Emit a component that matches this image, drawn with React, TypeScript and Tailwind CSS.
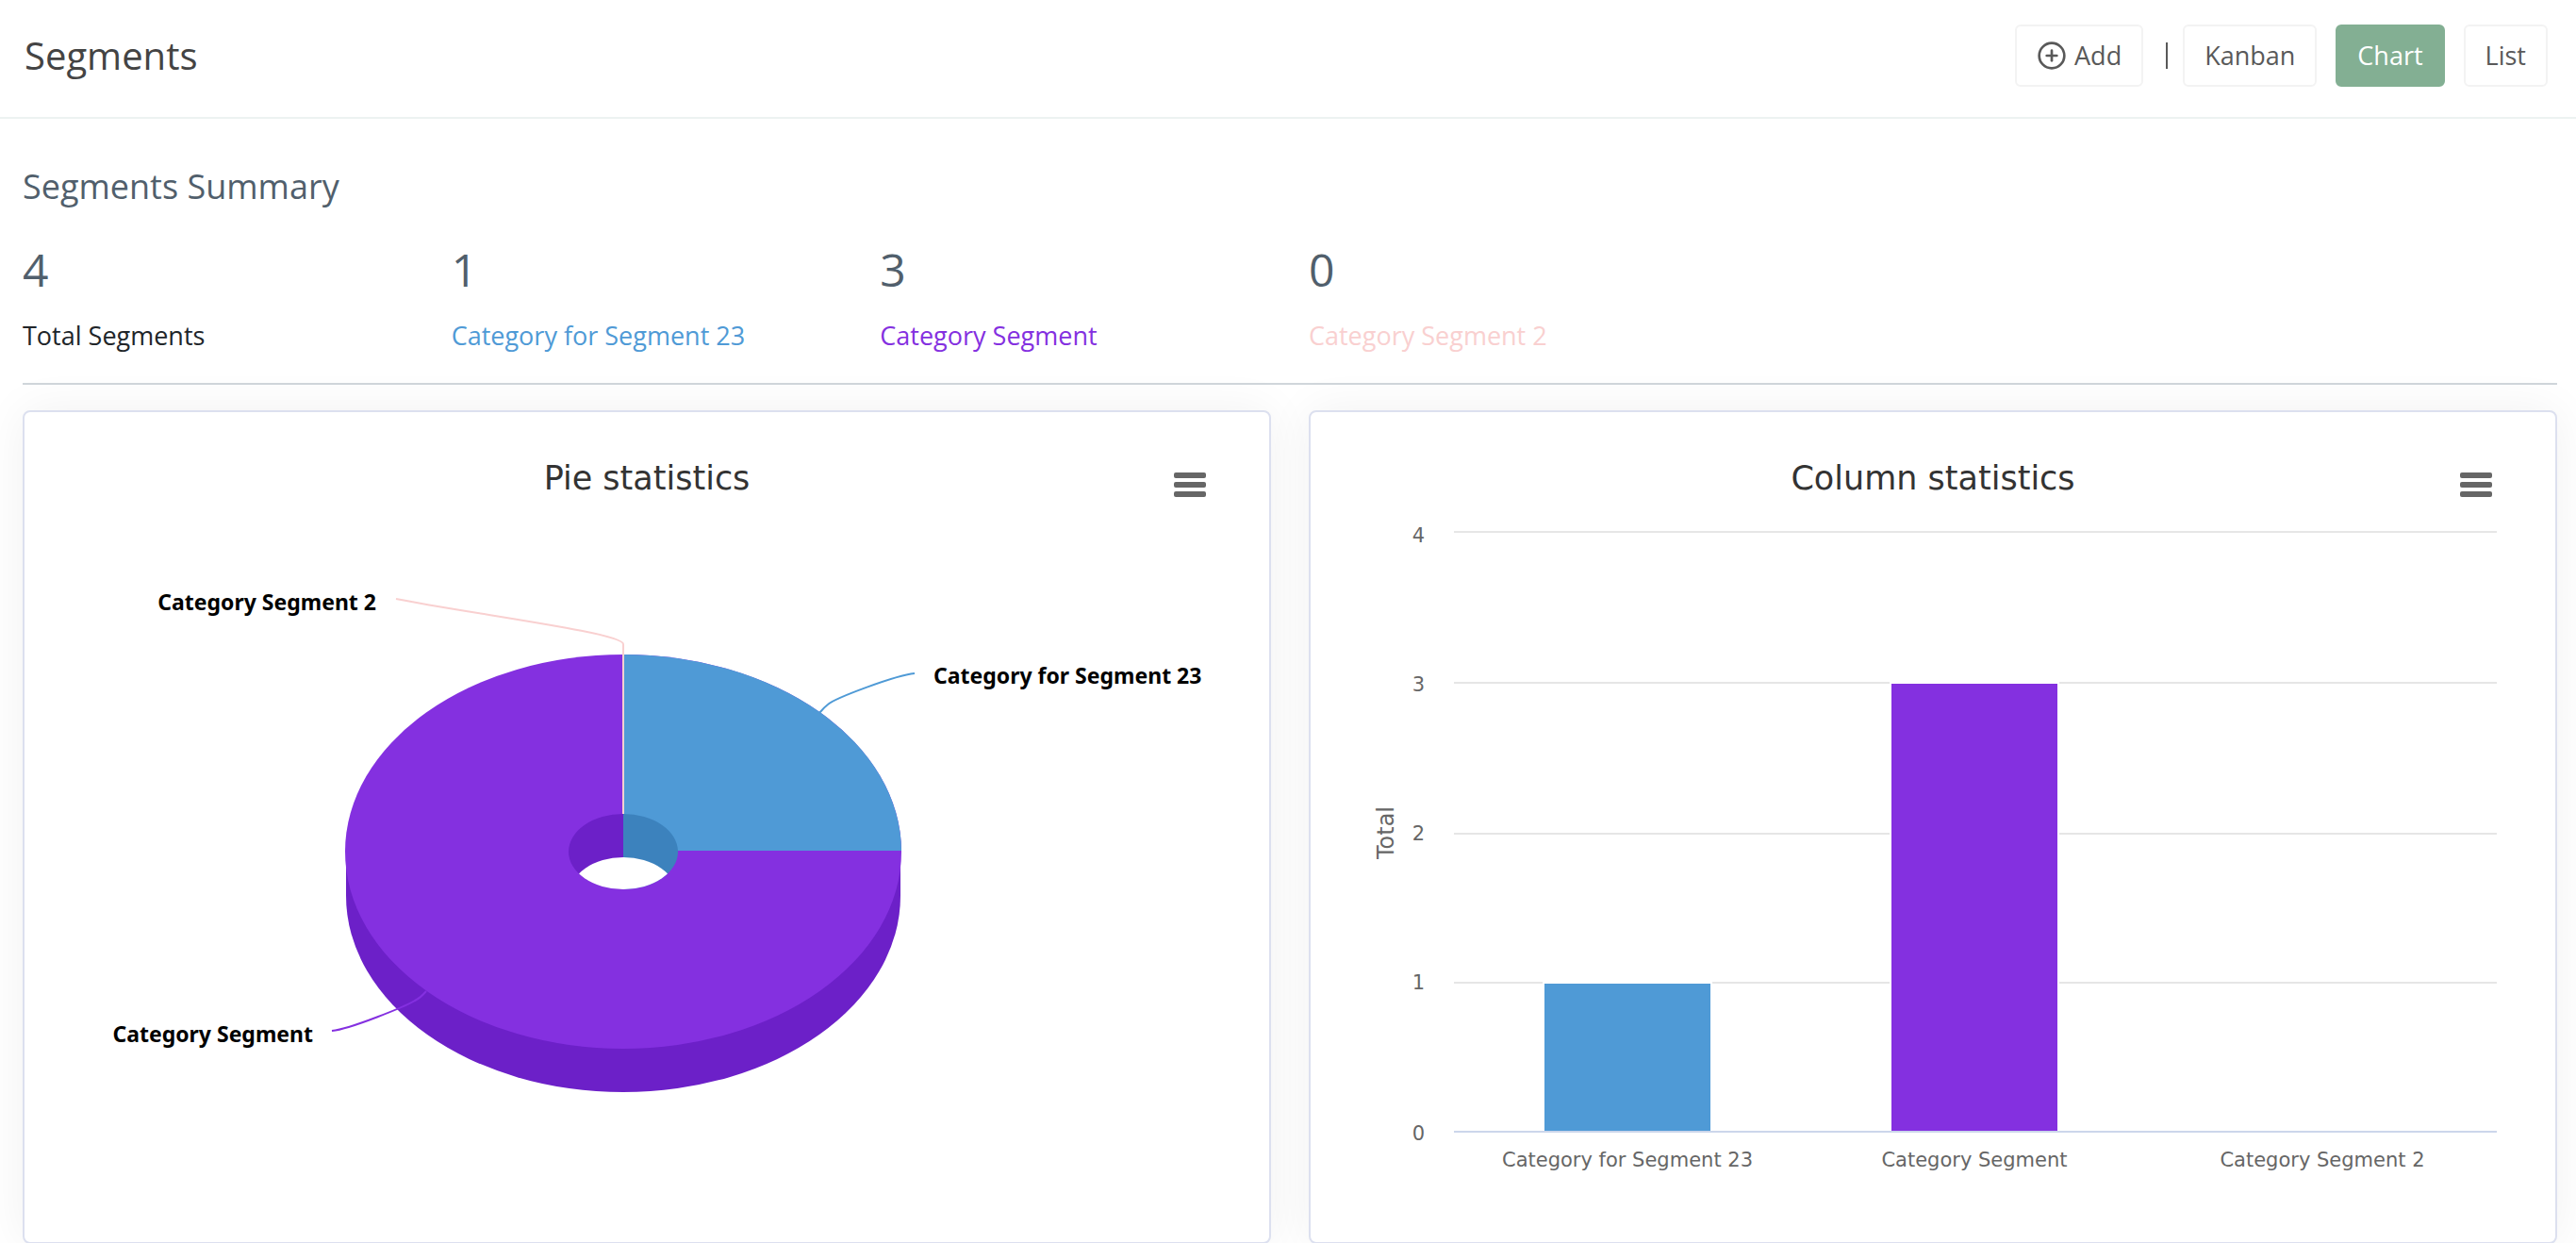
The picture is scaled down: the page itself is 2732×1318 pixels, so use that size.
import { CirclePlus } from "lucide-react";
import type { ReactNode } from "react";

const summary = [
  { total: 4, label: "Total Segments", tone: "text-[#212529]" },
  { total: 1, label: "Category for Segment 23", tone: "text-[#4f9ad6]" },
  { total: 3, label: "Category Segment", tone: "text-[#8430e0]" },
  { total: 0, label: "Category Segment 2", tone: "text-[#f9d0d0]" },
];

const gridLines = [
  { value: 4, y: 37, labelY: 48 },
  { value: 3, y: 197, labelY: 206 },
  { value: 2, y: 357, labelY: 364 },
  { value: 1, y: 515, labelY: 522 },
];

const columns = [
  { label: "Category for Segment 23", center: 336, top: 516, fill: "#4f9ad6" },
  { label: "Category Segment", center: 704, top: 198, fill: "#8430e0" },
  { label: "Category Segment 2", center: 1073, top: 672, fill: "#f9d0d0" },
];

const buttonBase =
  "flex h-[66px] items-center gap-2 rounded-md border-2 px-[21px] text-[27px] leading-10";

function ViewButton({ active, children }: { active?: boolean; children: ReactNode }) {
  return (
    <button
      type="button"
      className={
        active
          ? `${buttonBase} border-[#83af93] bg-[#83af93] text-white`
          : `${buttonBase} border-[#f3f3f3] bg-white text-[#595959]`
      }
    >
      {children}
    </button>
  );
}

function ChartCard({ title, children }: { title: string; children: ReactNode }) {
  return (
    <section className="rounded-lg border-2 border-[#dce0ef] bg-white shadow-[0_0_50px_rgba(0,0,0,0.06)]">
      <header className="grid grid-cols-[1fr_auto_1fr] items-end px-[67px] pt-[50px]">
        <h3 className="col-start-2 font-['DejaVu_Sans',sans-serif] text-[35px] leading-10 text-[#333333]">
          {title}
        </h3>
        <button type="button" aria-label={`${title} menu`} className="justify-self-end">
          <svg viewBox="0 0 34 26" className="block h-[26px] w-[34px] fill-[#666666]">
            <rect width="34" height="6" rx="2" />
            <rect y="10" width="34" height="6" rx="2" />
            <rect y="20" width="34" height="6" rx="2" />
          </svg>
        </button>
      </header>
      {children}
    </section>
  );
}

function PieChart() {
  return (
    <svg viewBox="0 0 1320 790" className="block h-auto w-full" role="img" aria-label="Pie statistics">
      {/* outer wall */}
      <path d="M341 376 V423 A294 208 0 0 0 929 423 V376 Z" fill="#6c20c8" />
      {/* top face */}
      <ellipse cx="635" cy="376" rx="295" ry="209" fill="#8430e0" />
      <path d="M635 167 A295 209 0 0 1 930 375 H635 Z" fill="#4f9ad6" />
      {/* hole with its inner wall */}
      <clipPath id="hole">
        <ellipse cx="635" cy="376" rx="58" ry="40" />
      </clipPath>
      <g clipPath="url(#hole)">
        <rect x="577" y="336" width="58" height="80" fill="#6c20c8" />
        <rect x="635" y="336" width="58" height="80" fill="#3c82bd" />
        <ellipse cx="635" cy="422" rx="57" ry="40" fill="#ffffff" />
      </g>
      <g fill="none" strokeWidth="2">
        <path d="M394 108 C474 124 635 144 635 156 V336" stroke="#f9d0d0" />
        <path d="M944 187 C924 189 860 213 852 220 Q848 223 843 229" stroke="#4f9ad6" />
        <path d="M326 566 C346 564 404 540 414 534 Q420 531 426 524" stroke="#8430e0" />
      </g>
      <g className="font-['Noto_Sans',sans-serif] text-[23px] font-bold" fill="#000000">
        <text x="373" y="120" textAnchor="end">Category Segment 2</text>
        <text x="964" y="198">Category for Segment 23</text>
        <text x="306" y="578" textAnchor="end">Category Segment</text>
      </g>
    </svg>
  );
}

function ColumnChart() {
  return (
    <svg
      viewBox="0 0 1320 790"
      className="block h-auto w-full font-['DejaVu_Sans',sans-serif] text-[21px]"
      fill="#666666"
      role="img"
      aria-label="Column statistics"
    >
      {gridLines.map((line) => (
        <g key={line.value}>
          <path d={`M152 ${line.y} H1258`} stroke="#e6e6e6" strokeWidth="2" />
          <text x="121" y={line.labelY} textAnchor="end">{line.value}</text>
        </g>
      ))}
      <text x="121" y="682" textAnchor="end">0</text>
      {columns.map((column) => (
        <g key={column.label}>
          {column.top < 672 && (
            <rect
              x={column.center - 89}
              y={column.top - 1}
              width="178"
              height={674 - column.top}
              fill={column.fill}
              stroke="#ffffff"
              strokeWidth="2"
            />
          )}
          <text x={column.center} y="710" textAnchor="middle">{column.label}</text>
        </g>
      ))}
      <path d="M152 673 H1258" stroke="#ccd6eb" strokeWidth="2" />
      <text transform="translate(88 356) rotate(-90)" textAnchor="middle" className="text-[24px]">
        Total
      </text>
    </svg>
  );
}

export default function App() {
  return (
    <div className="h-screen overflow-hidden bg-white font-['Open_Sans',sans-serif]">
      <header className="flex items-center justify-between border-b-2 border-[#edf2f1] pt-[26px] pr-[30px] pb-8 pl-[26px]">
        <h1 className="text-[40px] leading-[60px] text-[#444444]">Segments</h1>
        <div className="flex items-center gap-5 text-[#595959]">
          <ViewButton>
            <CirclePlus className="size-8" strokeWidth={2} />
            Add
          </ViewButton>
          <span className="-mr-1 ml-1 h-7 w-[2px] bg-[#595959]" />
          <ViewButton>Kanban</ViewButton>
          <ViewButton active>Chart</ViewButton>
          <ViewButton>List</ViewButton>
        </div>
      </header>

      <main className="pt-12 pr-5 pl-6">
        <h2 className="text-[36px] leading-[48px] text-[#515f6c]">Segments Summary</h2>
        <dl className="mt-8 grid grid-cols-6 gap-x-10 border-b-2 border-[#d0d6db] pb-[30px]">
          {summary.map((item) => (
            <div key={item.label} className="flex flex-col-reverse gap-[18px]">
              <dt className={`text-[27px] leading-10 whitespace-nowrap ${item.tone}`}>{item.label}</dt>
              <dd className="text-[48px] leading-[64px] text-[#515f6c]">{item.total}</dd>
            </div>
          ))}
        </dl>
        <div className="mt-[27px] grid grid-cols-2 gap-x-10">
          <ChartCard title="Pie statistics">
            <PieChart />
          </ChartCard>
          <ChartCard title="Column statistics">
            <ColumnChart />
          </ChartCard>
        </div>
      </main>
    </div>
  );
}
